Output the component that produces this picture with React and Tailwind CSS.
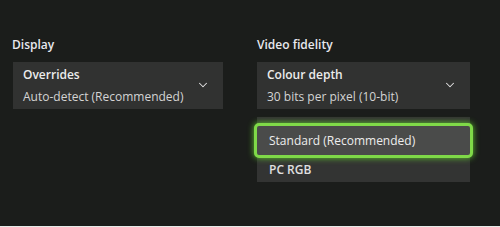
import { ChevronDown } from 'lucide-react';

function Select({ title, value }) {
  return (
    <div className="relative h-[47px] bg-[#313231] pl-[10px] pt-[2px]">
      <p className="text-[12px] leading-[22px] font-semibold text-[#ececec]">{title}</p>
      <p className="text-[12px] leading-[22px] text-[#d4d4d4]">{value}</p>
      <ChevronDown className="absolute right-[13px] top-[16px] w-[14px] h-[14px] text-[#e6e6e6]" strokeWidth={1.75} />
    </div>
  );
}

export default function App() {
  return (
    <div className="w-[500px] h-[227px] flex flex-col bg-[#1b1d1b] font-['Open_Sans',sans-serif]">
      <div className="flex-1 flex pl-[13px] pt-[37px]">
        {/* Display */}
        <div className="w-[210px]">
          <h3 className="text-[12px] leading-[16px] font-semibold text-[#e8e8ee] mb-[9px] -ml-[1px]">Display</h3>
          <Select title="Overrides" value="Auto-detect (Recommended)" />
        </div>

        {/* Video fidelity */}
        <div className="w-[213px] ml-[34px]">
          <h3 className="text-[12px] leading-[16px] font-semibold text-[#e8e8ee] mb-[9px]">Video fidelity</h3>
          <Select title="Colour depth" value="30 bits per pixel (10-bit)" />

          <div className="mt-[8px] bg-[#333433] pt-[6px]">
            <div className="-mx-[3px] h-[35px] flex items-center pl-[12px] rounded-[5px] border-[3px] border-[#7fd948] bg-[#4a4b4a] shadow-[0_0_6px_#5fc52e]">
              <span className="text-[12px] font-medium text-[#ededed]">Standard (Recommended)</span>
            </div>
            <div className="h-[24px] flex items-center pl-[12px]">
              <span className="text-[12px] font-semibold text-[#e0e0e0]">PC RGB</span>
            </div>
          </div>
        </div>
      </div>
      <div className="h-[1px] bg-[#e6eae8]" />
    </div>
  );
}
